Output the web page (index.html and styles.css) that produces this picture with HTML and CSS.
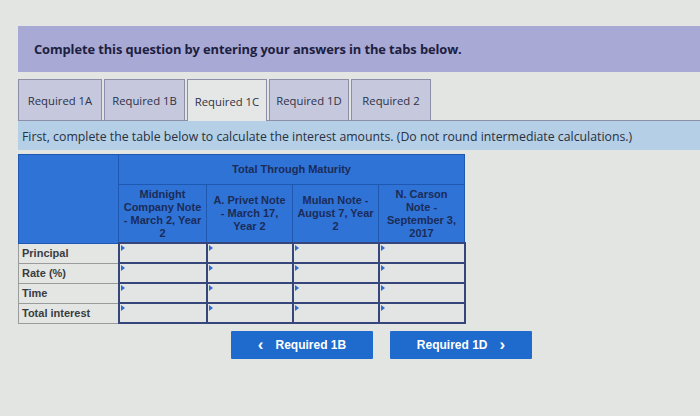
FILE: index.html
```html
<!DOCTYPE html>
<html>
<head>
<meta charset="utf-8">
<link rel="stylesheet" href="styles.css">
</head>
<body>
<div class="page">
  <div class="banner">Complete this question by entering your answers in the tabs below.</div>
  <div class="tabs">
    <div class="tab">Required 1A</div>
    <div class="tab">Required 1B</div>
    <div class="tab active">Required 1C</div>
    <div class="tab">Required 1D</div>
    <div class="tab">Required 2</div>
  </div>
  <div class="instr">First, complete the table below to calculate the interest amounts. (Do not round intermediate calculations.)</div>
  <table class="grid">
    <colgroup>
      <col class="w1"><col class="w2"><col class="w3"><col class="w3"><col class="w3">
    </colgroup>
    <tr class="h1">
      <th class="blank" rowspan="2"></th>
      <th colspan="4">Total Through Maturity</th>
    </tr>
    <tr class="h2">
      <th>Midnight Company Note - March 2, Year 2</th>
      <th>A. Privet Note - March 17, Year 2</th>
      <th>Mulan Note - August 7, Year 2</th>
      <th>N. Carson Note - September 3, 2017</th>
    </tr>
    <tr>
      <td class="label">Principal</td>
      <td class="inp"></td><td class="inp"></td><td class="inp"></td><td class="inp"></td>
    </tr>
    <tr>
      <td class="label">Rate (%)</td>
      <td class="inp"></td><td class="inp"></td><td class="inp"></td><td class="inp"></td>
    </tr>
    <tr>
      <td class="label">Time</td>
      <td class="inp"></td><td class="inp"></td><td class="inp"></td><td class="inp"></td>
    </tr>
    <tr>
      <td class="label">Total interest</td>
      <td class="inp"></td><td class="inp"></td><td class="inp"></td><td class="inp"></td>
    </tr>
  </table>
  <div class="nav">
    <div class="btn"><span class="chev">&lsaquo;</span>Required 1B</div>
    <div class="btn">Required 1D<span class="chev right">&rsaquo;</span></div>
  </div>
</div>
</body>
</html>
```

FILE: styles.css
```css
html, body {
  margin: 0;
  padding: 0;
}
body {
  background: #e3e5e2;
  width: 700px;
  height: 416px;
  overflow: hidden;
}
.page {
  padding: 26px 0 0 18px;
}
.banner {
  height: 46px;
  background: #a8a9d5;
  box-sizing: border-box;
  padding: 14px 0 0 16px;
  font-family: "Open Sans", sans-serif;
  font-weight: 700;
  font-size: 12.9px;
  color: #1d2040;
  letter-spacing: -0.1px;
}
.tabs {
  display: flex;
  gap: 2px;
  margin-top: 7px;
  height: 41px;
}
.tab {
  box-sizing: border-box;
  height: 41px;
  border: 1px solid #8d8fa8;
  border-bottom: none;
  background: #c6c8dd;
  font-family: "Open Sans", sans-serif;
  font-size: 11.3px;
  color: #2d3248;
  display: flex;
  align-items: center;
  justify-content: center;
  padding-top: 1px;
}
.tab:nth-child(1) { width: 84px; }
.tab:nth-child(2) { width: 81px; }
.tab:nth-child(3) { width: 80px; }
.tab:nth-child(4) { width: 80px; }
.tab:nth-child(5) { width: 80px; }
.tab.active {
  background: #e5e7e6;
  height: 42px;
  position: relative;
  z-index: 1;
}
.instr {
  height: 30px;
  background: #b4cfe6;
  border-top: 1px solid #8d8fa8;
  box-sizing: border-box;
  padding: 7px 0 0 4px;
  font-family: "Open Sans", sans-serif;
  font-size: 12.3px;
  color: #2a3040;
}
.grid {
  margin-top: 4px;
  border-collapse: collapse;
  table-layout: fixed;
  width: 447px;
  font-family: "Liberation Sans", Arial, sans-serif;
  font-size: 11px;
  font-weight: 700;
}
.w1 { width: 100px; }
.w2 { width: 88px; }
.w3 { width: 86px; }
.grid th {
  background: #2f73d7;
  border: 1px solid #1e58b0;
  color: #1b2c58;
  font-weight: 700;
  padding: 0 4px;
  line-height: 13px;
}
.h1 th { height: 29px; }
.h2 th { height: 57px; vertical-align: middle; }
.grid td {
  height: 18px;
  padding: 0;
}
.grid td.label {
  border: 1px solid #9a9c9c;
  background: #e4e6e4;
  color: #3a3c40;
  padding-left: 3px;
}
.grid td.inp {
  border: 2px solid #37467a;
  background: #e2e5e4;
  position: relative;
}
.grid td.inp::before {
  content: "";
  position: absolute;
  left: 1px;
  top: 1px;
  border-left: 4px solid #2f6bd0;
  border-top: 3px solid transparent;
  border-bottom: 3px solid transparent;
}
.nav {
  display: flex;
  gap: 17px;
  margin: 7px 0 0 213px;
}
.btn {
  width: 142px;
  height: 28px;
  background: #1e6bcd;
  color: #ffffff;
  font-family: "Liberation Sans", Arial, sans-serif;
  font-weight: 700;
  font-size: 12px;
  display: flex;
  align-items: center;
  justify-content: center;
  border-radius: 1px;
}
.chev {
  font-size: 17px;
  margin-right: 12px;
  line-height: 1;
  position: relative;
  top: -1px;
}
.chev.right {
  margin-right: 0;
  margin-left: 12px;
}
```
